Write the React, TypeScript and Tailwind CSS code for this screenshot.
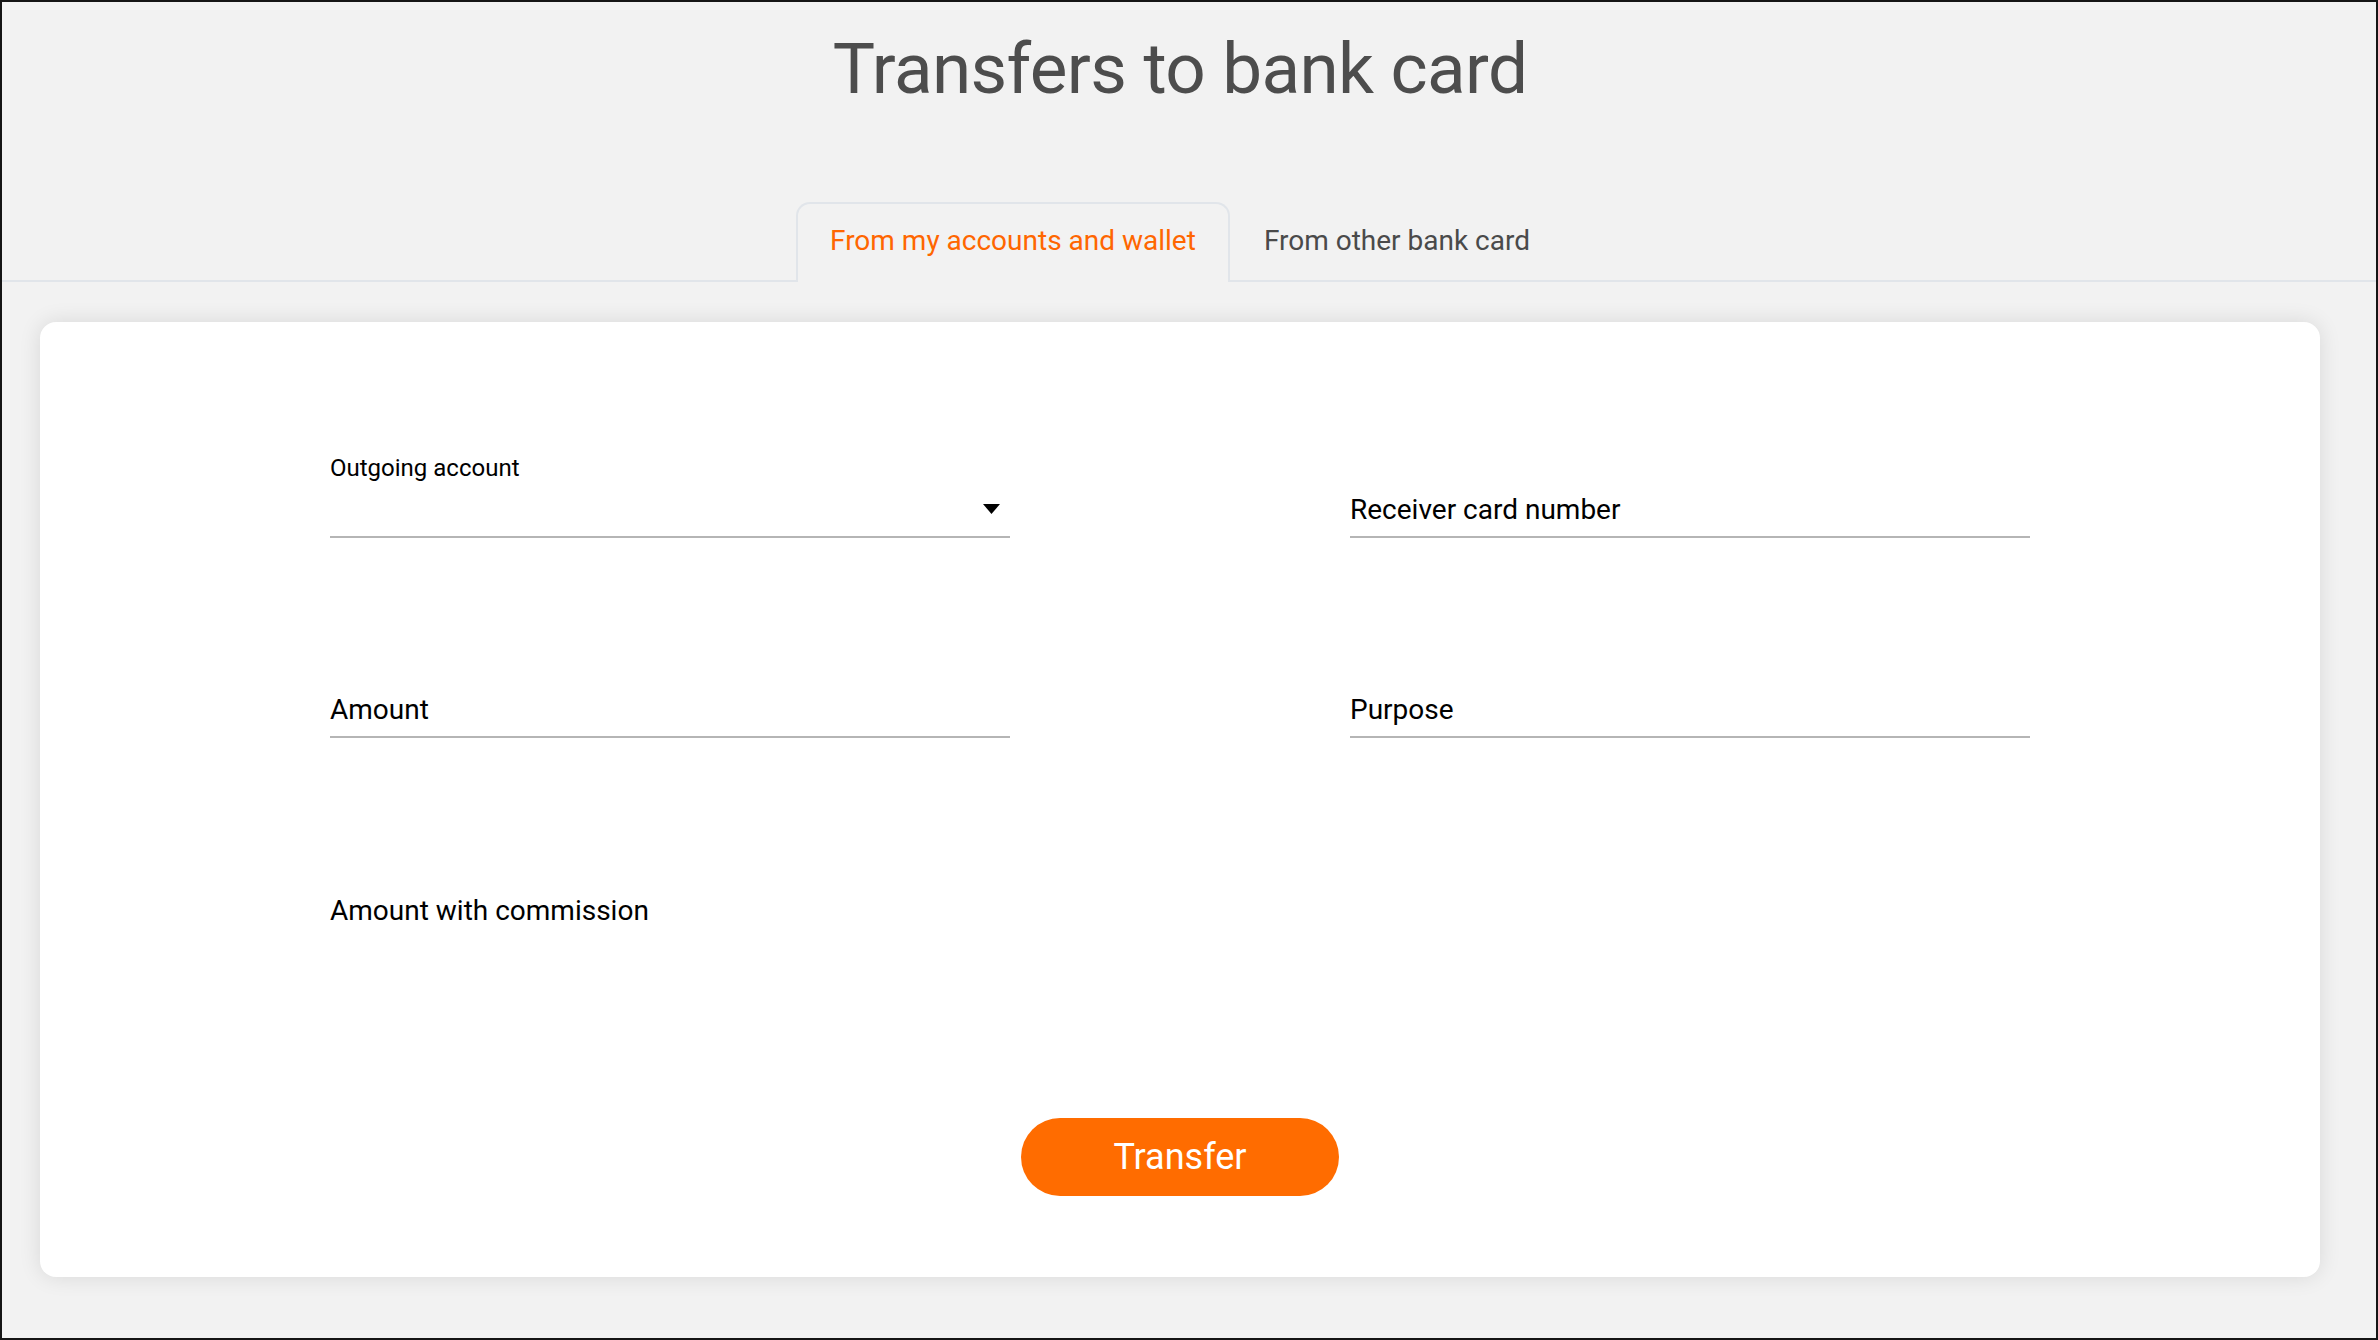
import React from "react";

function Field({ label }: { label: string }) {
  return (
    <div className="border-b-2 border-[#b5b5b5] pb-[10px]">
      <span className="block text-[28px] leading-[32px] text-black">{label}</span>
    </div>
  );
}

export default function App() {
  return (
    <div className="w-[2378px] h-[1340px] border-2 border-[#151515] bg-[#f2f2f2] font-['Roboto',sans-serif] overflow-hidden">
      <h1 className="pt-[31px] pr-[18px] text-center text-[71px] leading-[72px] tracking-[-0.6px] font-normal text-[#4d4d4d]">
        Transfers to bank card
      </h1>
      <div className="mt-[97px] flex justify-center border-b-2 border-[#e1e5ea] pr-[18px]">
        <div className="-mb-[2px] rounded-t-[14px] border-2 border-b-0 border-[#e1e5ea] bg-[#f2f2f2] px-[32px] pt-[20px] pb-[24px] text-[28px] leading-[34px] text-[#ff6600]">
          From my accounts and wallet
        </div>
        <div className="-mb-[2px] border-2 border-b-0 border-transparent px-[32px] pt-[20px] pb-[24px] text-[28px] leading-[34px] text-[#4a4a4a]">
          From other bank card
        </div>
      </div>
      <div className="mt-[40px] ml-[38px] mr-[56px] rounded-[16px] bg-white pt-[133px] pb-[81px] shadow-[0_0_22px_rgba(0,0,0,0.11)]">
        <div className="mx-auto w-[1700px]">
          <div className="grid grid-cols-[680px_680px] items-end gap-x-[340px]">
            <div>
              <span className="block text-[24px] leading-[26px] text-black">Outgoing account</span>
              <div className="flex h-[57px] items-center justify-end border-b-2 border-[#b5b5b5] pr-[10px]">
                <svg width="17" height="10" viewBox="0 0 17 10" className="mt-[1px]">
                  <polygon points="0,0 17,0 8.5,10" fill="#000" />
                </svg>
              </div>
            </div>
            <Field label="Receiver card number" />
          </div>
          <div className="mt-[156px] grid grid-cols-[680px_680px] items-end gap-x-[340px]">
            <Field label="Amount" />
            <Field label="Purpose" />
          </div>
          <div className="mt-[157px] text-[28px] leading-[32px] text-black">Amount with commission</div>
          <div className="mt-[191px] flex justify-center">
            <button className="h-[78px] w-[318px] rounded-full bg-[#ff6c00] text-[36px] leading-[40px] text-white">
              Transfer
            </button>
          </div>
        </div>
      </div>
    </div>
  );
}
